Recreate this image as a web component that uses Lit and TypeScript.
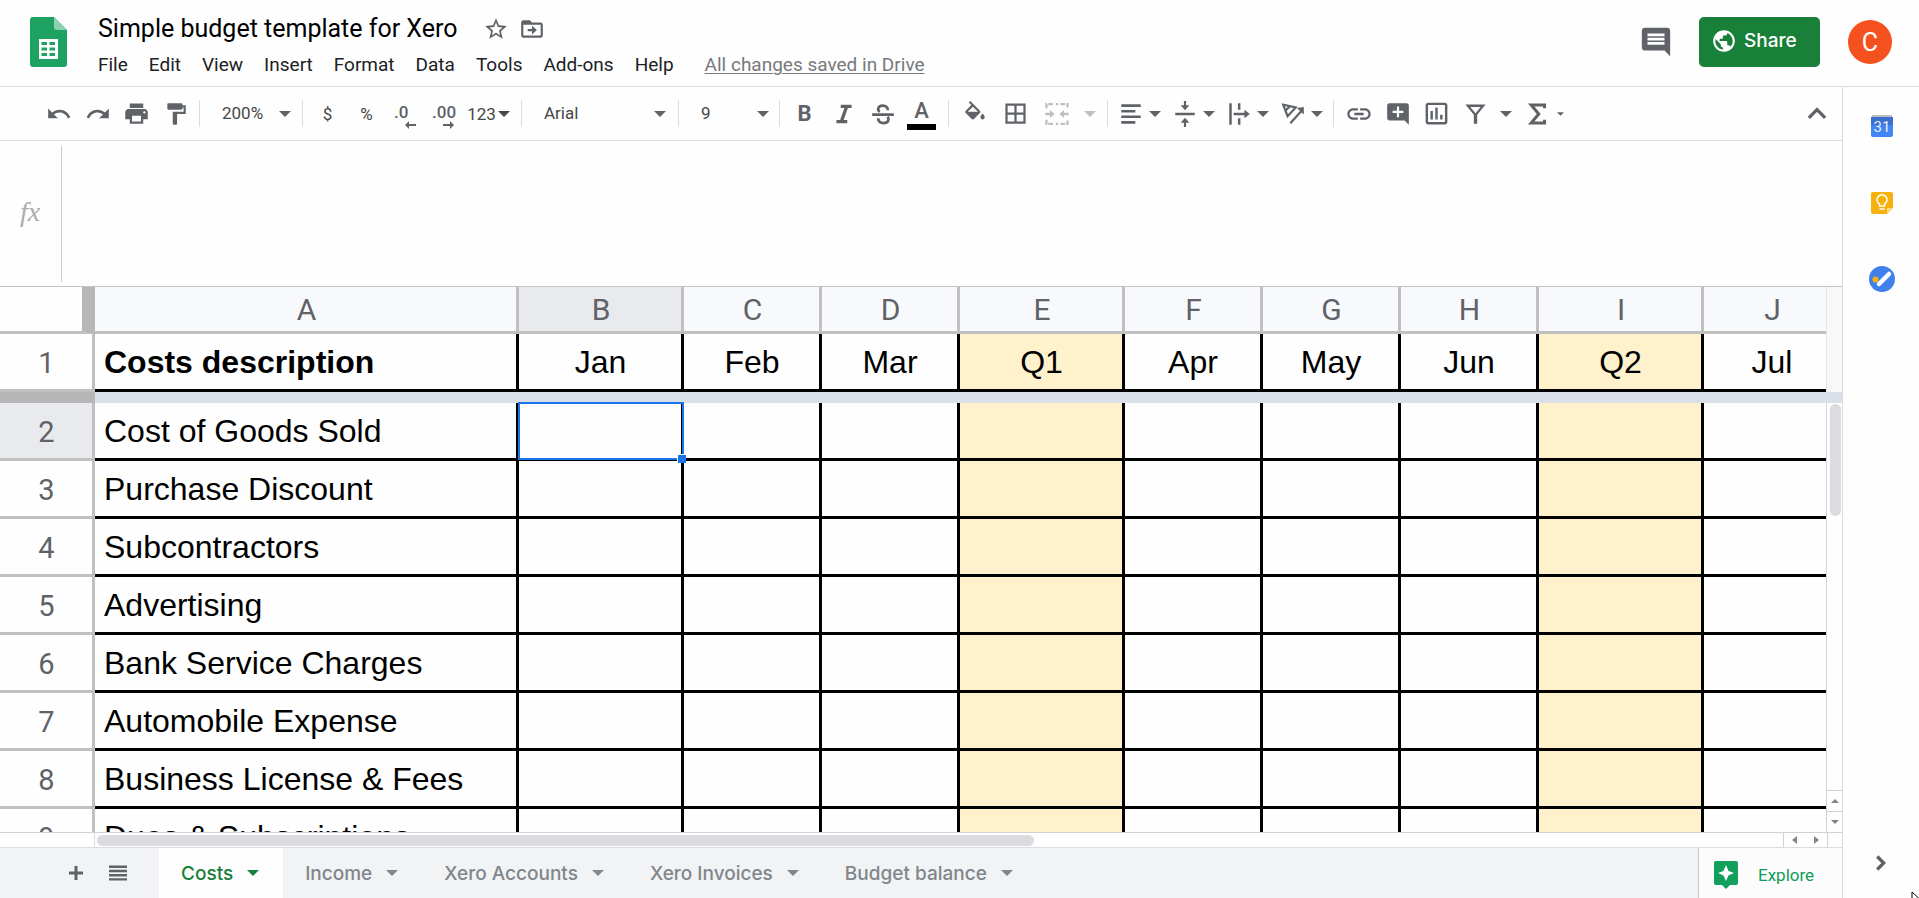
import { LitElement, html, css, svg, nothing } from "lit";
import { customElement } from "lit/decorators.js";
import { classMap } from "lit/directives/class-map.js";

const icon = (body: unknown, size = 26) =>
  html`<svg width=${size} height=${size} viewBox="0 0 24 24" fill="currentColor" aria-hidden="true">${body}</svg>`;
const path = (d: string) => svg`<path d=${d}></path>`;

const caret = html`<svg class="caret" width="12" height="6" viewBox="0 0 12 6" fill="currentColor" aria-hidden="true"><path d="M0 0h12L6 6z"></path></svg>`;

const undo = path("M12.5 8c-2.65 0-5.05.99-6.9 2.6L2 7v9h9l-3.62-3.62c1.39-1.16 3.16-1.88 5.12-1.88 3.54 0 6.55 2.31 7.6 5.5l2.37-.78C21.08 11.03 17.15 8 12.5 8z");
const redo = path("M18.4 10.6C16.55 8.99 14.15 8 11.5 8c-4.65 0-8.58 3.03-9.96 7.22L3.9 16c1.05-3.19 4.05-5.5 7.6-5.5 1.95 0 3.73.72 5.12 1.88L13 16h9V7l-3.6 3.6z");
const print = path("M19 8H5c-1.66 0-3 1.34-3 3v6h4v4h12v-4h4v-6c0-1.66-1.34-3-3-3zm-3 11H8v-5h8v5zm3-7c-.55 0-1-.45-1-1s.45-1 1-1 1 .45 1 1-.45 1-1 1zm-1-9H6v4h12V3z");
const paint = path("M18 4V3c0-.55-.45-1-1-1H5c-.55 0-1 .45-1 1v4c0 .55.45 1 1 1h12c.55 0 1-.45 1-1V6h1v4H9v11c0 .55.45 1 1 1h2c.55 0 1-.45 1-1v-9h8V4h-3z");
const star = path("M22 9.24l-7.19-.62L12 2 9.19 8.63 2 9.24l5.46 4.73L5.82 21 12 17.27 18.18 21l-1.63-7.03L22 9.24zM12 15.4l-3.76 2.27 1-4.28-3.32-2.88 4.38-.38L12 6.1l1.71 4.04 4.38.38-3.32 2.88 1 4.28L12 15.4z");
const folder = path("M20 6h-8l-2-2H4c-1.1 0-2 .9-2 2v12c0 1.1.9 2 2 2h16c1.1 0 2-.9 2-2V8c0-1.1-.9-2-2-2zm0 12H4V8h16v10zM12 9l4.500 4-4.500 4v-3H8v-2h4z");
const comment = path("M21.99 4c0-1.1-.89-2-1.99-2H4c-1.1 0-2 .9-2 2v12c0 1.1.9 2 2 2h14l4 4-.01-18zM18 14H6v-2h12v2zm0-3H6V9h12v2zm0-3H6V6h12v2z");
const globe = path("M12 2C6.48 2 2 6.48 2 12s4.48 10 10 10 10-4.48 10-10S17.52 2 12 2zm-1 17.93c-3.95-.49-7-3.85-7-7.93 0-.62.08-1.21.21-1.79L9 15v1c0 1.1.9 2 2 2v1.93zm6.9-2.54c-.26-.81-1-1.39-1.9-1.39h-1v-3c0-.55-.45-1-1-1H8v-2h2c.55 0 1-.45 1-1V7h2c1.1 0 2-.9 2-2v-.41c2.93 1.19 5 4.06 5 7.41 0 2.08-.8 3.97-2.1 5.39z");
const italic = svg`<path d="M9 5h10M5 19h10M14.500 5l-5 14" fill="none" stroke="currentColor" stroke-width="3"></path>`;
const strike = svg`<path d="M2 12.500h20M16.500 8.500C16.500 3 7.500 3 7.500 7.500q0 1.500 1.500 2.500M7.500 16c0 6 9.500 5.500 9.500 1q0-1.500-.7-2.500" fill="none" stroke="currentColor" stroke-width="2.600"></path>`;
const bucket = path("M16.560 8.940L7.620 0 6.210 1.410l2.380 2.380-5.150 5.150c-.59.59-.59 1.540 0 2.120l5.500 5.500c.29.29.68.44 1.060.44s.77-.15 1.060-.44l5.500-5.500c.59-.58.59-1.530 0-2.120zM10 5.210L14.790 10H5.210L10 5.210zM19 11.500s-2 2.170-2 3.500c0 1.100.9 2 2 2s2-.9 2-2c0-1.330-2-3.500-2-3.500z");
const borders = path("M3 3v18h18V3H3zm8 16H5v-6h6v6zm0-8H5V5h6v6zm8 8h-6v-6h6v6zm0-8h-6V5h6v6z");
const merge = svg`<path d="M3 7V3.500h6M15 3.500h6V7M3 17v3.500h6M15 20.500h6V17M11 3.500h2M11 20.500h2" fill="none" stroke="currentColor" stroke-width="2" stroke-dasharray="4 1"></path><path d="M2 11h4V8.500L10 12l-4 3.500V13H2zM22 11h-4V8.500L14 12l4 3.500V13h4z"></path>`;
const align = path("M3 3h18v2.500H3zM3 8.200h13v2.500H3zM3 13.300h18v2.500H3zM3 18.500h13V21H3z");
const valign = path("M3 10.800h18v2.400H3zM11 0h2v4h3l-4 4.500L8 4h3zM11 24h2v-4h3l-4-4.500L8 20h3z");
const wrap = path("M3 2h2.300v20H3zM11 2h2.300v6H11zM11 16h2.300v6H11zM7 10.900h10V8l5 4-5 4v-2.900H7z");
const rotate = svg`<path d="M3 3.500l4 10.500L14.500 6zM5 9l4.500-4.500M9.500 20.500L20 9" fill="none" stroke="currentColor" stroke-width="2"></path><path d="M22 5.500v7l-6.500-6z"></path>`;
const link = path("M3.900 12c0-1.710 1.390-3.100 3.100-3.100h4V7H7c-2.760 0-5 2.240-5 5s2.240 5 5 5h4v-1.900H7c-1.710 0-3.100-1.390-3.100-3.100zM8 13h8v-2H8v2zm9-6h-4v1.900h4c1.710 0 3.100 1.390 3.100 3.100s-1.390 3.100-3.100 3.100h-4V17h4c2.760 0 5-2.240 5-5s-2.240-5-5-5z");
const addComment = path("M21.990 4c0-1.100-.89-2-1.990-2H4c-1.100 0-2 .9-2 2v12c0 1.100.9 2 2 2h14l4 4-.01-18zM17 11h-4v4h-2v-4H7V9h4V5h2v4h4v2z");
const chart = path("M19 3H5c-1.100 0-2 .9-2 2v14c0 1.100.9 2 2 2h14c1.100 0 2-.9 2-2V5c0-1.100-.9-2-2-2zm0 16H5V5h14v14zM7 10h2v7H7zM11 7h2v10h-2zM15 13h2v4h-2z");
const filter = path("M3 4h18l-7.500 9v8h-3v-8zM7.400 6.300l4.600 5.500 4.600-5.500z");
const sigma = svg`<path d="M18.500 7V4.200H7l6.500 7.800L7 19.800h11.500V17" fill="none" stroke="currentColor" stroke-width="2.600"></path>`;
const chevron = svg`<path d="M4.500 15.500L12 8l7.500 7.500" fill="none" stroke="currentColor" stroke-width="3"></path>`;

const arrow = (left: boolean) =>
  html`<svg class="step" width="11" height="8" viewBox="0 0 11 8" fill="currentColor" aria-hidden="true">
    <path d=${left ? "M0 4l4-4v3h7v2H4v3z" : "M11 4L7 0v3H0v2h7v3z"}></path></svg>`;

@customElement("doc-header")
class DocHeader extends LitElement {
  static styles = css`
    :host { display: flex; height: 86px; border-bottom: 1px solid #dadce0; color: #202124; }
    .logo { margin: 17px 31px 0 30px; }
    .doc { flex: 1; padding-top: 13px; min-width: 0; }
    .title-row { display: flex; align-items: center; height: 31px; color: #5f6368; }
    h1 { margin: 0 26px 0 0; font-size: 25px; line-height: 31px; font-weight: 400; color: #000; white-space: nowrap; }
    button { font: inherit; border: 0; padding: 0; background: none; color: inherit; display: flex; align-items: center; }
    .title-row button { margin-right: 10px; }
    nav { display: flex; align-items: center; gap: 21px; height: 40px; font-size: 19px; white-space: nowrap; }
    nav a { margin-left: 10px; color: #77797c; text-underline-offset: 2px; text-decoration-thickness: 1px; }
    .actions { display: flex; align-items: center; padding: 0 27px 2px 0; color: #5f6368; }
    .actions .share { height: 50px; width: 121px; margin: 0 28px 0 26px; padding: 0 0 3px 12px; gap: 7px;
      border-radius: 5px; background: #188038; color: #fff; font: 500 19px Inter, Roboto, sans-serif; }
    .actions .avatar { width: 44px; height: 44px; border-radius: 50%; background: #f4511e; color: #fff;
      font-size: 25px; justify-content: center; }
  `;
  render() {
    return html`
      <svg class="logo" width="37" height="50" viewBox="0 0 37 50" aria-hidden="true">
        <path d="M3 0h21l13 13v34a3 3 0 0 1-3 3H3a3 3 0 0 1-3-3V3a3 3 0 0 1 3-3z" fill="#1ea261"></path>
        <path d="M24 0l13 13H27a3 3 0 0 1-3-3z" fill="#8ed1b1"></path>
        <path d="M9 22h19v20H9zM11.500 25v3h5.500v-3zM19.500 25v3H25v-3zM11.500 30.500v3h5.500v-3zM19.500 30.500v3H25v-3zM11.500 36v3h5.500v-3zM19.500 36v3H25v-3z" fill="#fff" fill-rule="evenodd"></path>
      </svg>
      <div class="doc">
        <div class="title-row">
          <h1>Simple budget template for Xero</h1>
          <button aria-label="Star">${icon(star)}</button>
          <button aria-label="Move">${icon(folder)}</button>
        </div>
        <nav>
          ${["File", "Edit", "View", "Insert", "Format", "Data", "Tools", "Add-ons", "Help"].map((m) => html`<button>${m}</button>`)}
          <a href="#">All changes saved in Drive</a>
        </nav>
      </div>
      <div class="actions">
        <button aria-label="Comments">${icon(comment, 34)}</button>
        <button class="share">${icon(globe)}<span>Share</span></button>
        <button class="avatar">C</button>
      </div>`;
  }
}

@customElement("tool-bar")
class ToolBar extends LitElement {
  static styles = css`
    :host { display: flex; align-items: center; height: 53px; padding-left: 39px; border-bottom: 1px solid #dadce0;
      color: #5f6368; font-size: 17px; }
    button { display: flex; align-items: center; justify-content: center; flex: none; width: 39px; height: 40px;
      border: 0; padding: 0; background: none; color: inherit; font: inherit; }
    .sep { flex: none; width: 1px; height: 27px; margin: 0 5px 0 4px; background: #dadce0; }
    .text { color: #444746; }
    .pick { display: grid; flex: none; align-items: center; color: #5f6368; }
    .pick select, .pick svg { grid-area: 1 / 1; }
    .pick svg { justify-self: end; pointer-events: none; }
    select { appearance: none; border: 0; background: none; width: 100%; height: 40px; margin: 0; padding: 0 0 2px 17px;
      font: inherit; color: #444746; }
    .zoom { width: 86px; margin-right: 7px; }
    .font { width: 139px; margin-right: 8px; }
    .size { width: 85px; margin-right: 6px; }
    .menu { width: 54px; justify-content: flex-start; padding-left: 5px; }
    .menu .caret { margin-left: 5px; }
    .format { width: 53px; gap: 2px; margin-right: 2px; color: #444746; }
    .decimal { display: grid; grid-template: 18px 8px / 22px; width: 38px; align-content: center; padding-top: 4px;
      text-align: left; font-weight: 500; line-height: 18px; }
    .step { justify-self: end; }
    .letters { display: flex; padding-right: 3px; }
    .bold { font-size: 22px; font-weight: 700; }
    .color { display: grid; grid-template: 20px 6px / 29px; row-gap: 3px; align-content: center; justify-items: center;
      padding-top: 4px; font-size: 22px; font-weight: 500; line-height: 20px; }
    .swatch { width: 29px; height: 6px; background: #000; }
    .fill { display: flex; }
    .fill button { width: 41px; }
    .fill .off { width: 42px; color: #bdbfc1; }
    .fill .drop { width: 24px; margin-right: 1px; }
    .drop { width: 22px; }
    .more { width: 8px; }
    .collapse { margin-left: auto; margin-right: 6px; }
  `;
  private tool(label: string, body: unknown, size = 26) {
    return html`<button aria-label=${label}>${icon(body, size)}</button>`;
  }
  private menu(label: string, body: unknown) {
    return html`<button class="menu" aria-label=${label}>${icon(body)}${caret}</button>`;
  }
  private pick(kind: string, label: string, value: string) {
    return html`<label class="pick ${kind}"><select aria-label=${label}><option>${value}</option></select>${caret}</label>`;
  }
  render() {
    const sep = html`<span class="sep"></span>`;
    return html`
      ${this.tool("Undo", undo)}${this.tool("Redo", redo)}${this.tool("Print", print, 27)}${this.tool("Paint format", paint)}
      ${sep}${this.pick("zoom", "Zoom", "200%")}${sep}
      <button class="text">$</button><button class="text">%</button>
      <button class="decimal" aria-label="Decrease decimal places"><span>.0</span>${arrow(true)}</button>
      <button class="decimal" aria-label="Increase decimal places"><span>.00</span>${arrow(false)}</button>
      <button class="format">123${caret}</button>
      ${sep}${this.pick("font", "Font", "Arial")}${sep}${this.pick("size", "Font size", "9")}${sep}
      <div class="letters">
        <button class="bold">B</button>${this.tool("Italic", italic)}${this.tool("Strikethrough", strike)}
        <button class="color">A<span class="swatch"></span></button>
      </div>
      ${sep}
      <div class="fill">
        ${this.tool("Fill colour", bucket)}${this.tool("Borders", borders, 27)}
        <button class="off" aria-label="Merge cells">${icon(merge, 28)}</button>
        <button class="off drop" aria-label="Merge options">${caret}</button>
      </div>
      ${sep}
      ${this.menu("Horizontal align", align)}${this.menu("Vertical align", valign)}${this.menu("Text wrapping", wrap)}${this.menu("Text rotation", rotate)}
      ${sep}
      ${this.tool("Insert link", link, 28)}${this.tool("Insert comment", addComment)}${this.tool("Insert chart", chart, 29)}
      ${this.tool("Filter", filter, 27)}<button class="drop" aria-label="Filter views">${caret}</button>
      ${this.tool("Functions", sigma, 28)}
      <button class="more" aria-label="More functions">
        <svg width="7" height="4" viewBox="0 0 12 6" fill="currentColor"><path d="M0 0h12L6 6z"></path></svg>
      </button>
      <button class="collapse" aria-label="Hide the menus">${icon(chevron)}</button>`;
  }
}

const columns = [
  { id: "A", w: 424, head: "Costs description" },
  { id: "B", w: 165, head: "Jan" },
  { id: "C", w: 138, head: "Feb" },
  { id: "D", w: 138, head: "Mar" },
  { id: "E", w: 165, head: "Q1", total: true },
  { id: "F", w: 138, head: "Apr" },
  { id: "G", w: 138, head: "May" },
  { id: "H", w: 138, head: "Jun" },
  { id: "I", w: 165, head: "Q2", total: true },
  { id: "J", w: 138, head: "Jul" },
];
const costs = ["Cost of Goods Sold", "Purchase Discount", "Subcontractors", "Advertising", "Bank Service Charges",
  "Automobile Expense", "Business License & Fees", "Dues & Subscriptions"];
const scroll = { across: 55.6, down: 29 };

@customElement("cost-sheet")
class CostSheet extends LitElement {
  static styles = css`
    :host { display: flex; flex-direction: column; min-height: 0; }
    .view { display: flex; flex: 1; min-height: 0; }
    .cells { flex: 1; min-width: 0; overflow: hidden; }
    table { table-layout: fixed; border-collapse: separate; border-spacing: 0; width: 1842px;
      font: 32px "Liberation Sans", Arial, sans-serif; color: #000; }
    th, td { box-sizing: content-box; height: 53px; padding: 2px 0 0 1px; line-height: 53px; white-space: nowrap; overflow: hidden;
      text-align: center; font-weight: 400; border: 0 solid #000; border-width: 0 3px 3px 0; }
    thead th { height: 44px; padding: 0 0 0 2px; font: 30px Roboto, sans-serif; color: #5f6368; background: #f8f9fc;
      border-color: #c0c0c0; }
    thead .corner { background: #fefefe; border-right: 13px solid #b7b7b7; }
    .num { font: 29px Roboto, sans-serif; color: #5f6368; border-color: #c0c0c0; }
    thead .active, .num.active { background: #e8eaed; }
    .label { text-align: left; padding-left: 9px; }
    .strong { font-weight: 700; }
    .total { background: #fef1cc; }
    .freeze th, .freeze td { height: 11px; padding: 0; line-height: 0; border: 0; background: #dadfe8; }
    .freeze th { background: #b7b7b7; }
    .selected { position: relative; overflow: visible; }
    .ring { position: absolute; inset: -1px -3px -2px -1px; border: 2px solid #1a73e8; }
    .handle { position: absolute; right: -5px; bottom: -5px; width: 8px; height: 8px; background: #1a73e8;
      border: 1px solid #fff; border-width: 1px 0 0 1px; }
    .down { display: flex; flex-direction: column; width: 16px; }
    .down .top { height: 105px; background: #f8f8f8; border-left: 1px solid #e4e4e4; }
    .down .band { height: 11px; background: #dadfe8; }
    .track { flex: 1; min-height: 0; padding: 1px 1px 0 3px; border-left: 1px solid #d5d6d8; }
    .thumb { border-radius: 6px; background: #dadce0; }
    .down .thumb { width: 11px; }
    button { display: flex; align-items: center; justify-content: center; border: 0; padding: 0; background: none; color: #80868b; }
    .down button { height: 21px; border-top: 1px solid #d0d2d4; border-left: 1px solid #d0d2d4; }
    .across { display: flex; height: 14px; border-top: 1px solid #d0d2d4; border-bottom: 1px solid #dadce0; }
    .across .pad { width: 94px; border-right: 1px solid #dadce0; }
    .across .track { border: 0; padding: 2px 0 0 2px; }
    .across .thumb { height: 11px; }
    .across button { width: 22px; }
    .across .first { border-left: 1px solid #d0d2d4; }
    .across .end { width: 14px; border-left: 1px solid #d0d2d4; }
  `;
  private tri(d: string) {
    return html`<svg width="8" height="8" viewBox="0 0 8 8" fill="currentColor" aria-hidden="true"><path d=${d}></path></svg>`;
  }
  render() {
    return html`
      <div class="view">
        <div class="cells">
          <table>
            <colgroup><col style="width:95px">${columns.map((c) => html`<col style="width:${c.w}px">`)}</colgroup>
            <thead>
              <tr><th class="corner"></th>${columns.map((c) => html`<th class=${classMap({ active: c.id === "B" })}>${c.id}</th>`)}</tr>
            </thead>
            <tbody>
              <tr>
                <th class="num">1</th>
                ${columns.map((c, i) => html`<td class=${classMap({ label: i === 0, strong: i === 0, total: !!c.total })}>${c.head}</td>`)}
              </tr>
              <tr class="freeze"><th></th><td colspan="10"></td></tr>
              ${costs.map((name, r) => html`<tr>
                <th class=${classMap({ num: true, active: r === 0 })}>${r + 2}</th>
                ${columns.map((c, i) => {
                  const selected = r === 0 && c.id === "B";
                  return html`<td class=${classMap({ label: i === 0, total: !!c.total, selected })}>${i === 0 ? name : nothing}${
                    selected ? html`<div class="ring"></div><div class="handle"></div>` : nothing}</td>`;
                })}
              </tr>`)}
            </tbody>
          </table>
        </div>
        <div class="down">
          <div class="top"></div><div class="band"></div>
          <div class="track"><div class="thumb" style="height:${scroll.down}%"></div></div>
          <button aria-label="Scroll up">${this.tri("M0 6h8L4 2z")}</button>
          <button aria-label="Scroll down">${this.tri("M0 2h8L4 6z")}</button>
        </div>
      </div>
      <div class="across">
        <div class="pad"></div>
        <div class="track"><div class="thumb" style="width:${scroll.across}%"></div></div>
        <button class="first" aria-label="Scroll left">${this.tri("M6 0v8L1 4z")}</button>
        <button aria-label="Scroll right">${this.tri("M2 0v8l5-4z")}</button>
        <div class="end"></div>
      </div>`;
  }
}

@customElement("sheet-tabs")
class SheetTabs extends LitElement {
  static styles = css`
    :host { display: flex; height: 50px; background: #f1f3f4; color: #80868b; font: 500 19px Inter, Roboto, sans-serif; }
    button { display: flex; align-items: center; border: 0; padding: 0; background: none; color: inherit; font: inherit; white-space: nowrap; }
    .tools { display: flex; align-items: center; gap: 18px; width: 95px; padding-left: 64px; color: #5f6368; }
    .tab { gap: 14px; padding: 0 24px 0 22px; }
    .tab.on { background: #fefefe; color: #188038; }
    .explore { gap: 18px; margin-left: auto; width: 144px; padding: 4px 0 0 13px; border-left: 1px solid #c4c7c5; background: #fcfcfc;
      color: #0f9d58; font: 17px Roboto, sans-serif; }
  `;
  render() {
    return html`
      <div class="tools">
        <button aria-label="Add sheet">${icon(path("M19 13.500h-5.500V19h-3v-5.500H5v-3h5.500V5h3v5.500H19z"), 24)}</button>
        <button aria-label="All sheets">${icon(path("M3 4.500h18V7H3zM3 8.800h18v2.400H3zM3 13h18v2.400H3zM3 17.200h18v2.400H3z"), 24)}</button>
      </div>
      ${["Costs", "Income", "Xero Accounts", "Xero Invoices", "Budget balance"].map(
        (name, i) => html`<button class=${classMap({ tab: true, on: i === 0 })}>${name}${caret}</button>`)}
      <button class="explore">
        <svg width="28" height="30" viewBox="0 0 28 30" aria-hidden="true">
          <path d="M4 1h20a2 2 0 0 1 2 2v20a2 2 0 0 1-2 2h-6l-4 4-4-4H4a2 2 0 0 1-2-2V3a2 2 0 0 1 2-2z" fill="#12a05c"></path>
          <path d="M14 5l2.500 6 5.500 2-5.500 2.500L14 21l-2.500-5.500L6 13l5.500-2z" fill="#fff"></path>
        </svg>Explore
      </button>`;
  }
}

@customElement("side-panel")
class SidePanel extends LitElement {
  static styles = css`
    :host { display: flex; flex-direction: column; align-items: center; width: 76px; padding-top: 26px; border-left: 1px solid #dadce0;
      color: #5f6368; }
    button { display: flex; border: 0; padding: 0; background: none; color: inherit; }
    .app { margin: 0 0 48px 1px; }
    .show { margin: auto 0 22px 0; }
    text { font: 15px Roboto, sans-serif; }
  `;
  render() {
    return html`
      <button class="app" aria-label="Calendar"><svg width="28" height="28" viewBox="0 0 28 28">
        <path d="M4 2h20v4H4z" fill="#bdbdbd"></path>
        <path d="M3 4h22v18a2 2 0 0 1-2 2H5a2 2 0 0 1-2-2z" fill="#4285f4"></path>
        <path d="M3 4h22v8H3z" fill="#3b6fd0"></path>
        <text x="14" y="19" text-anchor="middle" fill="#e8f0fe">31</text></svg></button>
      <button class="app" aria-label="Keep"><svg width="28" height="28" viewBox="0 0 28 28">
        <path d="M5 3h18a2 2 0 0 1 2 2v14l-6 6H5a2 2 0 0 1-2-2V5a2 2 0 0 1 2-2z" fill="#f5b20c"></path>
        <path d="M19 25v-6h6z" fill="#fbdc8a"></path>
        <path d="M11.500 17v-2a5 5 0 1 1 5 0v2zM11.500 20h5" fill="none" stroke="#fff" stroke-width="1.500"></path></svg></button>
      <button class="app" aria-label="Tasks"><svg width="28" height="28" viewBox="0 0 28 28">
        <circle cx="14" cy="14" r="13" fill="#4080ec"></circle>
        <path d="M11 19L21 9" stroke="#fff" stroke-width="4.500" stroke-linecap="round"></path>
        <circle cx="7.500" cy="14.500" r="3" fill="#f5b20c"></circle></svg></button>
      <button class="show" aria-label="Show side panel">${icon(svg`<path d="M8.500 6l6 6-6 6" fill="none" stroke="currentColor" stroke-width="3"></path>`)}</button>`;
  }
}

@customElement("app-root")
class AppRoot extends LitElement {
  static styles = css`
    :host { position: relative; display: flex; flex-direction: column; height: 100vh; overflow: hidden; background: #fefefe;
      font-family: Roboto, sans-serif; }
    .body { display: flex; flex: 1; min-height: 0; }
    main { display: flex; flex: 1; flex-direction: column; min-width: 0; }
    cost-sheet { flex: 1; }
    .formula { display: flex; align-items: center; height: 145px; border-bottom: 1px solid #c4c4c4; }
    .formula label { width: 61px; box-sizing: border-box; padding: 0 0 4px 20px; font: italic 28px "Liberation Serif", serif; color: #acacac; }
    .formula textarea { flex: 1; height: 136px; box-sizing: border-box; border: 0; border-left: 1px solid #c8c8c8; padding: 8px;
      resize: none; background: none; font: 20px "Liberation Sans", sans-serif; outline: 0; }
    .pointer { position: absolute; right: -6px; bottom: -14px; }
  `;
  render() {
    return html`
      <doc-header></doc-header>
      <div class="body">
        <main>
          <tool-bar></tool-bar>
          <div class="formula"><label for="fx">fx</label><textarea id="fx"></textarea></div>
          <cost-sheet></cost-sheet>
          <sheet-tabs></sheet-tabs>
        </main>
        <side-panel></side-panel>
      </div>
      <svg class="pointer" width="14" height="21" viewBox="0 0 14 21" aria-hidden="true">
        <path d="M1 1v16l4-4 3 6 2-1-2-6h5z" fill="#fff" stroke="#000"></path></svg>`;
  }
}
